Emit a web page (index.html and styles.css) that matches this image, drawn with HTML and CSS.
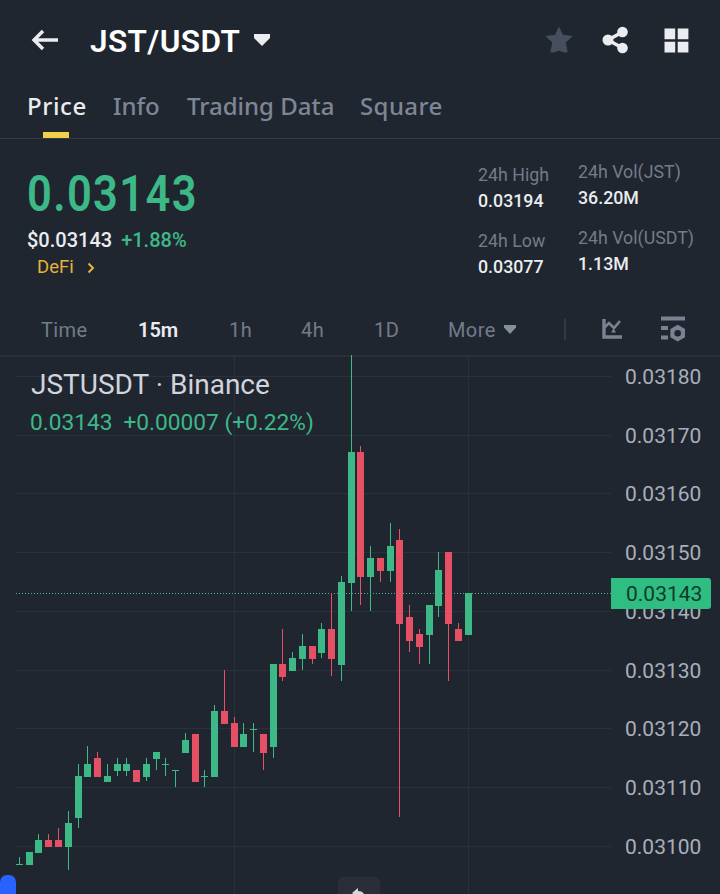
FILE: index.html
```html
<!DOCTYPE html>
<html lang="en">

<head>
    <meta charset="UTF-8">
    <meta name="viewport" content="width=device-width, initial-scale=1.0">
    <title>JST/USDT</title>
    <link rel="stylesheet" href="styles.css">
</head>

<body>

<header class="header">
    <svg class="back" width="28" height="22" viewBox="0 0 28 22">
        <path d="M27 11H4M12 2L3 11l9 9" fill="none" stroke="#eaecef" stroke-width="3.4"/>
    </svg>
    <h1 class="pair">JST/USDT</h1>
    <svg class="caret" width="16" height="12" viewBox="0 0 16 12">
        <path d="M0 0h16v4L8 12 0 4z" fill="#eaecef"/>
    </svg>
    <div class="actions">
        <svg width="28" height="28" viewBox="0 0 28 28">
            <path d="M14 1.500l3.700 7.900 9.100.9-6.600 6.200 2 9.500h-3L14 24l-5.200 2h-3l2-9.500-6.600-6.200 9.100-.9z" fill="#474f5d" stroke="#474f5d" stroke-linejoin="round"/>
        </svg>
        <svg width="26" height="28" viewBox="0 0 26 28">
            <path d="M20.500 6L6 14l14.500 8" fill="none" stroke="#eaecef" stroke-width="3.500"/>
            <circle cx="6" cy="14" r="5.500" fill="#eaecef"/>
            <circle cx="20.500" cy="6" r="5.300" fill="#eaecef"/>
            <circle cx="20.500" cy="22" r="5.300" fill="#eaecef"/>
        </svg>
        <svg width="25" height="25" viewBox="0 0 25 25">
            <path d="M0.500 0.500h10.700v10.700H0.500zM13.700 0.500h10.700v10.700H13.700zM0.500 13.700h10.700v10.700H0.500zM13.700 13.700h10.700v10.700H13.700z" fill="#eaecef"/>
        </svg>
    </div>
</header>

<nav class="tabs">
    <a class="tab tab-price active">Price</a>
    <a class="tab tab-info">Info</a>
    <a class="tab tab-trading">Trading Data</a>
    <a class="tab tab-square">Square</a>
</nav>

<section class="summary">
    <div class="quote">
        <div class="price">0.03143</div>
        <div class="fiat"><span class="usd">$0.03143</span><span class="change">+1.88%</span></div>
        <div class="tag">DeFi
            <svg width="8" height="12" viewBox="0 0 8 12">
                <path d="M1.500 1.500L6 6l-4.500 4.500" fill="none" stroke="#e3b33a" stroke-width="2"/>
            </svg>
        </div>
    </div>
    <div class="stats range">
        <p class="label high">24h High</p>
        <p class="value">0.03194</p>
        <p class="label low">24h Low</p>
        <p class="value">0.03077</p>
    </div>
    <div class="stats volume">
        <p class="label jst">24h Vol(JST)</p>
        <p class="value">36.20M</p>
        <p class="label usdt">24h Vol(USDT)</p>
        <p class="value">1.13M</p>
    </div>
</section>

<div class="intervals">
    <span class="interval time">Time</span>
    <span class="interval selected">15m</span>
    <span class="interval hour">1h</span>
    <span class="interval four">4h</span>
    <span class="interval day">1D</span>
    <span class="interval more">More</span>
    <svg class="more-caret" width="12" height="9" viewBox="0 0 12 9">
        <path d="M0 0h12v2.500L6 9 0 2.500z" fill="#848e9c"/>
    </svg>
    <span class="divider"></span>
    <svg class="indicators" width="20" height="20" viewBox="0 0 20 20">
        <path d="M2 0v18h18" fill="none" stroke="#7b8291" stroke-width="3.400"/>
        <path d="M3 8l4-4 5 5 6-7" fill="none" stroke="#7b8291" stroke-width="2.600"/>
        <path d="M11.500 9.500l2.500 4H9z" fill="#7b8291"/>
    </svg>
    <svg class="settings" width="26" height="26" viewBox="0 0 26 26">
        <path d="M1 2.500h24M1 12h7M1 21.500h7" fill="none" stroke="#7b8291" stroke-width="4"/>
        <path d="M17.700 8.800l7.300 4.200v8.200l-7.300 4.200-7.300-4.200V13z" fill="#7b8291"/>
        <circle cx="17.700" cy="17.200" r="3.300" fill="#202630"/>
    </svg>
</div>

<main class="chart">
    <svg class="candles" width="611" height="538" viewBox="0 356 611 538">
        <path class="grid" d="M15 377.500H611M15 436.500H611M15 494.500H611M15 553.500H611M15 612.500H611M15 671.500H611M15 729.500H611M15 788.500H611M15 847.500H611M234.500 356V895M468.500 356V895" transform="translate(0 -1)"/>
        <path class="last-price" d="M16 593.500H611"/>

        <!-- rising candles: wicks and dojis, then bodies -->
        <path class="wick up" d="M19.500 857V865M16 864.500H23M38.500 834V840M68.500 811V870M78.500 764V828M87.500 746V764M107.500 764V776M117.500 758V776M126.500 758V776M146.500 758V781M156.500 759V770M165.500 758V776M162 764.500H169M175.500 770V787M172 770.500H179M185.500 733V740M204.500 770V787M201 776.500H208M214.500 705V711M243.500 723V734M253.500 723V752M250 729.500H257M273.500 747V758M292.500 652V658M302.500 634V670M321.500 623V658M341.500 576V681M351.500 355V611M370.500 546V611M390.500 523V582M429.500 635V664M438.500 552V617"/>
        <path class="body up" d="M29.500 852V865M38.500 840V853M68.500 823V847M78.500 776V818M87.500 764V777M107.500 776V782M117.500 764V771M126.500 764V771M146.500 764V777M156.500 752V759M185.500 740V753M214.500 711V777M243.500 734V747M273.500 664V747M292.500 658V671M302.500 646V659M321.500 629V653M341.500 582V665M351.500 452V583M370.500 558V577M390.500 546V571M429.500 605V635M438.500 570V606M468.500 593V635"/>

        <!-- falling candles -->
        <path class="wick down" d="M48.500 834V840M58.500 828V840M97.500 752V758M224.500 670V711M234.500 717V723M263.500 753V770M282.500 629V681M312.500 659V664M331.500 593V676M360.500 446V605M380.500 571V582M399.500 529V817M409.500 605V652M419.500 629V664M448.500 624V681M458.500 623V629"/>
        <path class="body down" d="M48.500 840V847M58.500 840V847M97.500 758V777M136.500 770V782M195.500 734V782M224.500 711V724M234.500 723V747M263.500 734V753M282.500 664V677M312.500 646V659M331.500 629V659M360.500 452V577M380.500 558V571M399.500 540V624M409.500 617V641M419.500 634V647M448.500 552V624M458.500 629V641"/>
    </svg>

    <div class="axis">
        <span>0.03180</span>
        <span>0.03170</span>
        <span>0.03160</span>
        <span>0.03150</span>
        <span>0.03140</span>
        <span>0.03130</span>
        <span>0.03120</span>
        <span>0.03110</span>
        <span>0.03100</span>
    </div>
    <div class="current">0.03143</div>

    <div class="legend">
        <p class="symbol">JSTUSDT · Binance</p>
        <p class="movement"><span>0.03143</span><span>+0.00007 (+0.22%)</span></p>
    </div>

    <div class="marker"></div>
    <div class="reset">
        <svg width="16" height="14" viewBox="0 0 16 14">
            <path d="M1 6l6-5v3c5 0 7 3 7 8h-3c0-3-1-4-4-4v3z" fill="#d5d8df"/>
        </svg>
    </div>
</main>

</body>
</html>
```
FILE: styles.css
```css
:root {
    --bg: #202630;
    --text: #eaecef;
    --muted: #7e8696;
    --dim: #747b88;
    --green: #3cb986;
    --red: #e65064;
    --yellow: #f2d04b;
}

* {
    margin: 0;
    padding: 0;
    box-sizing: border-box;
}

body {
    width: 720px;
    height: 894px;
    overflow: hidden;
    background: var(--bg);
    color: var(--text);
    font-family: Roboto, sans-serif;
    white-space: nowrap;
}

svg {
    display: block;
    flex: none;
}

/* Header */
.header {
    display: flex;
    align-items: center;
    height: 80px;
    padding: 0 31px;
}

.pair {
    width: 149px;
    margin-left: 31px;
    padding-top: 3px;
    color: #fff;
    font-size: 31.5px;
    font-weight: 600;
    line-height: 40px;
    letter-spacing: 0.4px;
}

.caret {
    margin-left: 15px;
}

.actions {
    display: flex;
    align-items: center;
    margin-left: auto;
}

.actions svg + svg {
    margin-left: 29px;
}

.actions svg:last-child {
    margin-left: 36px;
}

/* Tabs */
.tabs {
    display: flex;
    height: 59px;
    padding-left: 27px;
    border-bottom: 1px solid #353b45;
}

.tab {
    position: relative;
    padding-top: 9px;
    color: var(--muted);
    font-family: "Noto Sans", sans-serif;
    font-size: 24px;
    font-weight: 500;
    line-height: 34px;
}

.tab-price { width: 86px; }
.tab-info { width: 74px; }
.tab-trading { width: 173px; }

.tab-square {
    letter-spacing: 0.4px;
}

.tab.active {
    color: var(--text);
    letter-spacing: 0.6px;
}

.tab.active::after {
    content: "";
    position: absolute;
    left: 16px;
    bottom: 0;
    width: 26px;
    height: 6px;
    background: var(--yellow);
}

/* Price summary */
.summary {
    display: flex;
    height: 164px;
    padding-left: 27px;
}

.quote {
    width: 451px;
    padding-top: 25px;
}

.price {
    color: var(--green);
    font-size: 50.5px;
    font-weight: 600;
    line-height: 60px;
    letter-spacing: 1.6px;
    transform: scaleX(0.86);
    transform-origin: left;
}

.fiat {
    display: flex;
    gap: 9px;
    padding-top: 3px;
    font-size: 20px;
    font-weight: 500;
    line-height: 26px;
}

.change {
    color: var(--green);
}

.tag {
    display: flex;
    align-items: center;
    gap: 13px;
    padding: 1px 0 0 10px;
    color: #e3b33a;
    font-size: 18.5px;
    line-height: 27px;
}

.stats {
    width: 100px;
    padding-top: 23px;
    font-size: 17.8px;
    line-height: 26px;
}

.volume {
    padding-top: 20px;
}

.stats .label {
    color: var(--dim);
    font-size: 17.8px;
}

.stats .value {
    margin-bottom: 14px;
    font-weight: 500;
}

/* Chart intervals */
.intervals {
    display: flex;
    align-items: center;
    height: 54px;
    padding-left: 41px;
    border-bottom: 2px solid #2a303b;
    color: var(--dim);
    font-size: 20px;
    line-height: 26px;
    letter-spacing: 0.4px;
}

.interval {
    padding-top: 1px;
}

.time { width: 97px; }
.selected { width: 91px; }
.hour { width: 72px; }
.four { width: 73px; }
.day { width: 74px; }
.more { width: 56px; }

.selected {
    color: var(--text);
    font-weight: 600;
    letter-spacing: 0;
}

.divider {
    width: 2px;
    height: 21px;
    margin-left: 48px;
    background: #343a45;
}

.indicators {
    margin-left: 36px;
}

.settings {
    margin-left: 38px;
}

/* Chart */
.chart {
    position: relative;
    display: flex;
    height: 538px;
    margin-top: -1px;
}

.candles {
    overflow: visible;
}

.candles path {
    fill: none;
}

.grid {
    stroke: #2b313b;
}

.last-price {
    stroke: #4cb892;
    stroke-dasharray: 1 2;
}

.up { stroke: var(--green); }
.down { stroke: var(--red); }

.candles .body {
    stroke-width: 7;
}

.axis {
    display: flex;
    flex-direction: column;
    padding: 0 0 0 14px;
    margin-top: -8px;
    color: #a9afba;
    font-size: 21px;
    line-height: 58.7px;
}

.current {
    position: absolute;
    left: 611px;
    top: 222px;
    width: 100px;
    height: 31px;
    padding-left: 15px;
    border-radius: 0 3px 3px 0;
    background: #30bd82;
    color: #0e3b29;
    font-size: 21px;
    line-height: 32px;
}

.legend {
    position: absolute;
    left: 30px;
    top: 12px;
}

.symbol {
    padding-left: 1px;
    color: #d1d4dc;
    font-size: 28px;
    line-height: 34px;
}

.movement {
    display: flex;
    gap: 11px;
    padding-top: 6px;
    color: var(--green);
    font-size: 22.7px;
    line-height: 30px;
}

.marker {
    position: absolute;
    left: 0;
    bottom: -14px;
    width: 16px;
    height: 33px;
    border-radius: 7px;
    background: #2962ff;
}

.reset {
    position: absolute;
    left: 338px;
    bottom: -20px;
    display: flex;
    justify-content: center;
    width: 42px;
    height: 37px;
    padding-top: 10px;
    border-radius: 5px;
    background: #2a2e39;
}
```
